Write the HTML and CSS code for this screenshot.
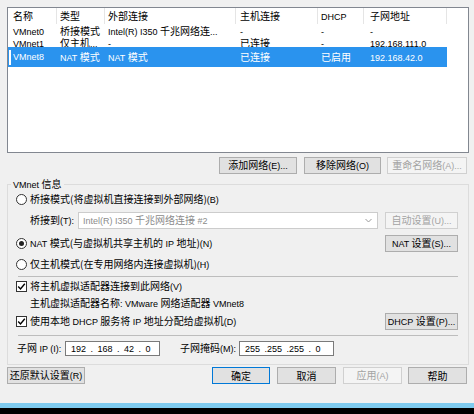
FILE: index.html
```html
<!DOCTYPE html>
<html>
<head>
<meta charset="utf-8">
<link rel="stylesheet" href="styles.css">
</head>
<body>
<div class="dlg">
  <div class="list">
    <div class="row hdr">
      <div class="c c1">名称</div>
      <div class="c c2">类型</div>
      <div class="c c3">外部连接</div>
      <div class="c c4">主机连接</div>
      <div class="c c5"><span class="l">DHCP</span></div>
      <div class="c c6">子网地址</div>
    </div>
    <div class="row r0">
      <div class="c c1"><span class="l">VMnet0</span></div>
      <div class="c c2">桥接模式</div>
      <div class="c c3"><span class="l">Intel(R) I350 </span>千兆网络连<span class="l">...</span></div>
      <div class="c c4"><span class="l">-</span></div>
      <div class="c c5"><span class="l">-</span></div>
      <div class="c c6"><span class="l">-</span></div>
    </div>
    <div class="row r1">
      <div class="c c1"><span class="l">VMnet1</span></div>
      <div class="c c2">仅主机<span class="l">...</span></div>
      <div class="c c3"><span class="l">-</span></div>
      <div class="c c4">已连接</div>
      <div class="c c5"><span class="l">-</span></div>
      <div class="c c6"><span class="l">192.168.111.0</span></div>
    </div>
    <div class="row r2 sel">
      <div class="c c1"><span class="l">VMnet8</span></div>
      <div class="c c2"><span class="l">NAT </span>模式</div>
      <div class="c c3"><span class="l">NAT </span>模式</div>
      <div class="c c4">已连接</div>
      <div class="c c5">已启用</div>
      <div class="c c6"><span class="l">192.168.42.0</span></div>
    </div>
  </div>

  <div class="btns">
    <div class="btn w78"><span>添加网络<span class="l">(E)...</span></span></div>
    <div class="btn w77"><span>移除网络<span class="l">(O)</span></span></div>
    <div class="btn w80 dis"><span>重命名网络<span class="l">(A)...</span></span></div>
  </div>

  <fieldset class="group">
    <legend class="lg"><span class="l">VMnet </span>信息</legend>

    <div class="opt h15">
      <span class="rb"></span>
      <span>桥接模式(将虚拟机直接连接到外部网络)<span class="l">(B)</span></span>
    </div>

    <div class="opt h26 ind">
      <span class="lab48">桥接到<span class="l">(T):</span></span>
      <div class="sel-box">
        <span><span class="l">Intel(R) I350 </span>千兆网络连接<span class="l"> #2</span></span>
        <svg class="chev" width="7" height="5" viewBox="0 0 7 5"><path d="M0.5 1 L3.5 4 L6.5 1" fill="none" stroke="#9a9a9a" stroke-width="1"/></svg>
      </div>
      <div class="btn w73 dis push"><span>自动设置<span class="l">(U)...</span></span></div>
    </div>

    <div class="opt h21">
      <span class="rb on"></span>
      <span><span class="l">NAT </span>模式(与虚拟机共享主机的<span class="l"> IP </span>地址)<span class="l">(N)</span></span>
      <div class="btn w73 push"><span><span class="l">NAT </span>设置<span class="l">(S)...</span></span></div>
    </div>

    <div class="opt h20">
      <span class="rb"></span>
      <span>仅主机模式(在专用网络内连接虚拟机)<span class="l">(H)</span></span>
    </div>

    <div class="sep"></div>

    <div class="opt h19">
      <span class="cb"><svg width="9" height="9" viewBox="0 0 9 9"><path d="M1.2 4.6 L3.5 6.9 L7.8 1.8" fill="none" stroke="#000" stroke-width="1.4"/></svg></span>
      <span>将主机虚拟适配器连接到此网络<span class="l">(V)</span></span>
    </div>

    <div class="opt h14 ind">
      <span>主机虚拟适配器名称<span class="l">: VMware </span>网络适配器<span class="l"> VMnet8</span></span>
    </div>

    <div class="opt h23">
      <span class="cb"><svg width="9" height="9" viewBox="0 0 9 9"><path d="M1.2 4.6 L3.5 6.9 L7.8 1.8" fill="none" stroke="#000" stroke-width="1.4"/></svg></span>
      <span>使用本地<span class="l"> DHCP </span>服务将<span class="l"> IP </span>地址分配给虚拟机<span class="l">(D)</span></span>
      <div class="btn w73 push"><span><span class="l">DHCP </span>设置<span class="l">(P)...</span></span></div>
    </div>

    <div class="sep"></div>

    <div class="opt h25 sub">
      <span class="lab48">子网<span class="l"> IP (I):</span></span>
      <div class="ip"><span class="l">192 . 168 . 42 . 0</span></div>
      <span class="lab59">子网掩码<span class="l">(M):</span></span>
      <div class="ip"><span class="l">255 .255 .255 . 0</span></div>
    </div>
  </fieldset>

  <div class="foot">
    <div class="btn w78"><span>还原默认设置<span class="l">(R)</span></span></div>
    <div class="right">
      <div class="btn w58 def"><span>确定</span></div>
      <div class="btn w59"><span>取消</span></div>
      <div class="btn w59 dis"><span>应用<span class="l">(A)</span></span></div>
      <div class="btn w59"><span>帮助</span></div>
    </div>
  </div>
</div>
<div class="edge"></div>
<div class="black"></div>
</body>
</html>
```

FILE: styles.css
```css
* { box-sizing: border-box; }
html, body { margin: 0; padding: 0; }
body {
  width: 474px;
  height: 414px;
  overflow: hidden;
  background: #f0f0f0;
  font-family: "Noto Sans CJK SC", "Liberation Sans", sans-serif;
  font-size: 10px;
  line-height: 14px;
  color: #000;
  display: flex;
  flex-direction: column;
}
.l {
  font-family: "Liberation Sans", Arial, sans-serif;
  font-size: 9px;
}
.dlg { flex: 1; padding: 7px 5px 0 7px; }

/* list */
.list {
  height: 146px;
  border: 1px solid #828790;
  background: #fff;
}
.row { display: flex; white-space: nowrap; }
.c { overflow: hidden; padding-left: 4px; }
.c1 { width: 49px; padding-left: 5px; }
.c2 { width: 48px; padding-left: 3px; }
.c3 { width: 131px; padding-left: 3px; }
.c4 { width: 82px; }
.c5 { width: 46px; padding-left: 3px; }
.c6 { width: 83px; padding-left: 6px; }
.hdr { height: 16px; line-height: 16px; }
.hdr .c { border-right: 1px solid #e5e5e5; }
.r0 { height: 13px; line-height: 13px; }
.r1 { height: 10px; line-height: 12px; overflow: hidden; }
.r2 { height: 20px; line-height: 20px; }
.sel { background: #2a93ee; color: #fff; width: 439px; }
.sel .c1 { display: flex; align-items: center; padding-left: 1px; }
.sel .c1::before {
  content: "";
  width: 2px;
  height: 15px;
  background: #fff;
  margin-right: 2px;
  flex: none;
}

/* buttons */
.btn {
  height: 17px;
  border: 1px solid #adadad;
  background: #e1e1e1;
  display: flex;
  align-items: center;
  justify-content: center;
  white-space: nowrap;
  line-height: 14px;
  flex: none;
}
.btn.dis { background: #f4f4f4; border-color: #d0d0d0; color: #a3a3a3; }
.btn.def { border-color: #0078d7; }
.w58 { width: 58px; }
.w59 { width: 59px; }
.w73 { width: 73px; }
.w77 { width: 77px; }
.w78 { width: 78px; }
.w80 { width: 80px; }
.push { margin-left: auto; }

.btns {
  display: flex;
  justify-content: flex-end;
  gap: 7px;
  margin-top: 4px;
  padding-right: 2px;
}
.btns .w77 { margin-right: -1px; }

/* group */
.group {
  margin: 3px 0 0 0;
  padding: 0 10px 3px 7px;
  border: 1px solid #dcdcdc;
  min-width: 0;
}
.lg {
  padding: 0 2px;
  margin-left: -4px;
  line-height: 14px;
}
.opt { display: flex; align-items: center; white-space: nowrap; }
.h14 { height: 14px; }
.h15 { height: 15px; }
.h19 { height: 19px; }
.h20 { height: 20px; }
.h21 { height: 21px; }
.h23 { height: 23px; }
.h25 { height: 25px; }
.h26 { height: 26px; }
.ind { padding-left: 15px; }
.rb {
  width: 11px;
  height: 11px;
  border-radius: 50%;
  border: 1px solid #333;
  background: #fff;
  margin: 0 3px 0 1px;
  display: flex;
  align-items: center;
  justify-content: center;
  flex: none;
}
.rb.on::after {
  content: "";
  width: 5px;
  height: 5px;
  border-radius: 50%;
  background: #222;
}
.cb {
  width: 11px;
  height: 11px;
  border: 1px solid #333;
  background: #fff;
  margin: 0 3px 0 1px;
  display: flex;
  align-items: center;
  justify-content: center;
  flex: none;
}
.lab48 { width: 48px; flex: none; }
.lab59 { width: 59px; flex: none; }
.sel-box {
  width: 300px;
  height: 17px;
  border: 1px solid #cccccc;
  background: #fff;
  color: #8c8c8c;
  padding: 0 5px 0 4px;
  display: flex;
  align-items: center;
  justify-content: space-between;
}
.sep {
  height: 1px;
  background: #bdbdbd;
  margin: 2px 0 0 3px;
}
.sub { padding-left: 2px; }
.ip {
  width: 95px;
  height: 15px;
  border: 1px solid #7a7a7a;
  background: #fff;
  padding-left: 5px;
  display: flex;
  align-items: center;
  word-spacing: 2px;
  flex: none;
}
.ip + .lab59 { margin-left: 20px; }

/* footer */
.foot {
  display: flex;
  justify-content: space-between;
  margin-top: 2px;
  padding-right: 2px;
}
.right { display: flex; gap: 7px; }
.right .btn:last-child { margin-left: -1px; }

.edge { height: 5px; background: #7fcbef; flex: none; }
.black { height: 6px; background: #000; flex: none; }
```
